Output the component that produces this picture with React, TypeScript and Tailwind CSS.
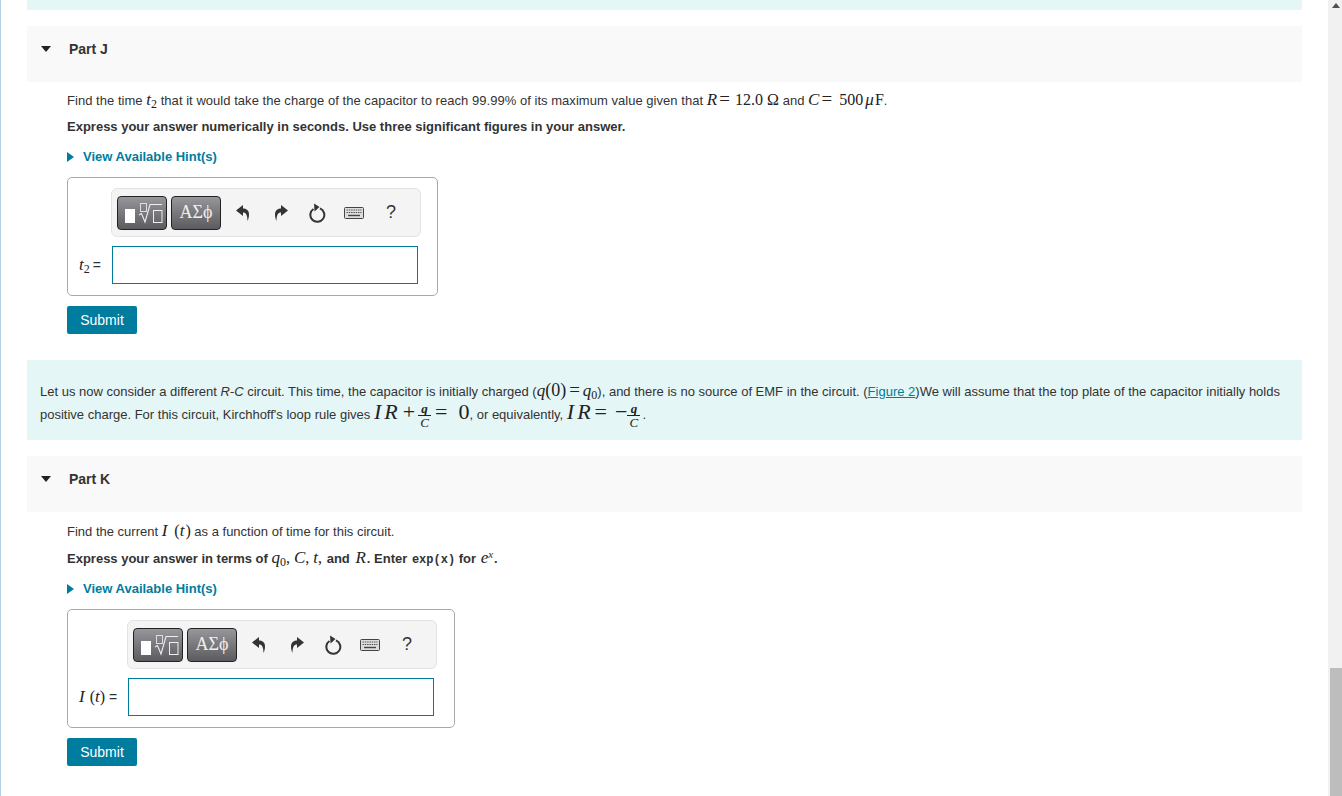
import React from 'react';

const Mi = ({ children, className = '' }: { children: React.ReactNode; className?: string }) => (
  <span className={`font-['Liberation_Serif',serif] italic font-normal text-[17px] text-[#222] ${className}`}>{children}</span>
);

const Mn = ({ children, className = '' }: { children: React.ReactNode; className?: string }) => (
  <span className={`font-['Liberation_Serif',serif] font-normal text-[16px] text-[#222] ${className}`}>{children}</span>
);

const Sub = ({ children }: { children: React.ReactNode }) => (
  <span className="font-['Liberation_Serif',serif] font-normal text-[12px] relative top-[3px] text-[#222]">{children}</span>
);

const Big = ({ children, className = '' }: { children: React.ReactNode; className?: string }) => (
  <span className={`font-['Liberation_Serif',serif] text-[22px] leading-[20px] text-[#222] ${className}`}>{children}</span>
);

const Frac = ({ top, bottom, className = '' }: { top: string; bottom: string; className?: string }) => (
  <span className={`inline-flex flex-col items-center align-middle -my-[6px] w-[13px] font-['Liberation_Serif',serif] italic font-bold text-[13px] leading-[11px] text-[#222] ${className}`}>
    <span className="border-b border-[#222] w-full text-center pb-[1px]">{top}</span>
    <span className="font-normal pt-[1px]">{bottom}</span>
  </span>
);

const PartHeader = ({ title }: { title: string }) => (
  <div className="h-14 bg-[#f9f9f9] flex items-start pl-[14px] pt-[14px]">
    <svg width="10" height="6" viewBox="0 0 10 6" className="mt-[6px]">
      <path d="M0 0H10L5 6Z" fill="#222" />
    </svg>
    <span className="ml-[18px] text-[14px] leading-[18px] font-bold text-[#333]">{title}</span>
  </div>
);

const Hint = () => (
  <div className="mt-[12px] h-[18px] flex items-center">
    <svg width="7" height="10" viewBox="0 0 7 10">
      <path d="M0 0L7 5L0 10Z" fill="#007c9f" />
    </svg>
    <span className="ml-[9px] text-[13px] font-bold text-[#007c9f]">View Available Hint(s)</span>
  </div>
);

const Radical = () => (
  <svg width="48" height="32" viewBox="0 0 48 32" className="block">
    <rect x="7" y="12" width="10" height="14" fill="#fff" />
    <rect x="22.5" y="6.5" width="6" height="8" fill="none" stroke="#ddd" strokeWidth="1" />
    <path d="M21 18L23.5 16.5L27 25L32 7.5H44" fill="none" stroke="#eee" strokeWidth="1.1" />
    <rect x="35.5" y="13.5" width="8.5" height="12" fill="none" stroke="#eee" strokeWidth="1" />
  </svg>
);

const Keyboard = () => (
  <svg width="20" height="12" viewBox="0 0 20 12" className="block">
    <rect x="0.5" y="0.5" width="19" height="11" rx="1" fill="#ddd" stroke="#444" />
    <path d="M2.5 3H17.5M2.5 5.5H17.5" stroke="#555" strokeWidth="1.2" strokeDasharray="1.5 0.8" />
    <path d="M4 8.5H16" stroke="#444" strokeWidth="1.4" />
  </svg>
);

const Toolbar = ({ className }: { className: string }) => (
  <div className={`h-[49px] w-[310px] bg-[#f4f4f4] border border-[#e3e3e3] rounded-[6px] flex items-center pl-[5px] ${className}`}>
    <div className="w-[50px] h-[34px] rounded-[4px] border border-[#222] bg-gradient-to-b from-[#96969b] to-[#5c5c60] flex items-center justify-center">
      <Radical />
    </div>
    <div className="ml-[4px] w-[50px] h-[34px] rounded-[4px] border border-[#222] bg-gradient-to-b from-[#96969b] to-[#5c5c60] flex items-center justify-center font-['Liberation_Serif',serif] text-[18px] text-[#eee]">
      ΑΣϕ
    </div>
    <svg width="14" height="16" viewBox="0 0 14 16" className="ml-[15px]">
      <path d="M7 0L0 5.5L7 11V7.5C10 7.5 11.5 10 11.5 16C14.5 9 13 3.5 7 3.5Z" fill="#333" />
    </svg>
    <svg width="14" height="16" viewBox="0 0 14 16" className="ml-[24px]">
      <path d="M7 0L14 5.5L7 11V7.5C4 7.5 2.5 10 2.5 16C-0.5 9 1 3.5 7 3.5Z" fill="#333" />
    </svg>
    <svg width="18" height="20" viewBox="0 0 18 20" className="ml-[20px]">
      <path d="M5.5 6A7 7 0 1 0 12 5.4" fill="none" stroke="#333" strokeWidth="2" />
      <path d="M6 0.5L11.5 4L6.5 8.5Z" fill="#333" />
    </svg>
    <span className="ml-[18px]"><Keyboard /></span>
    <span className="ml-[22px] font-['Liberation_Sans',sans-serif] text-[18px] text-[#333]">?</span>
  </div>
);

const AnswerBox = ({ label, boxClass, toolbarClass, labelClass }: { label: React.ReactNode; boxClass: string; toolbarClass: string; labelClass: string }) => (
  <div className={`h-[119px] border border-[#aaa] rounded-[5px] pt-[10px] pl-[11px] ${boxClass}`}>
    <Toolbar className={toolbarClass} />
    <div className="mt-[9px] flex items-center">
      <div className={`text-[14px] text-[#333] whitespace-nowrap ${labelClass}`}>{label}</div>
      <div className="w-[306px] h-[38px] bg-white border border-[#007c9f]" />
    </div>
  </div>
);

const Submit = () => (
  <button className="mt-[10px] w-[70px] h-[28px] bg-[#007c9f] rounded-[2px] text-white text-[14px] block">Submit</button>
);

export default function App() {
  return (
    <div className="w-[1342px] h-[796px] overflow-hidden flex bg-white font-['Liberation_Sans',Arial,sans-serif] text-[13px] text-[#333]">
      <div className="w-px bg-[#b5d0e3] shrink-0" />
      <main className="w-[1327px] shrink-0 pl-[26px] pr-[26px]">
        <div className="h-[10px] bg-[#e5f6f6]" />

        <section className="mt-4">
          <PartHeader title="Part J" />
          <div className="pl-[40px]">
            <p className="mt-[8px] h-[18px] leading-[18px] whitespace-nowrap tracking-[0.035px]">
              Find the time <Mi>t</Mi><Sub>2</Sub> that it would take the charge of the capacitor to reach 99.99% of its maximum value given that <Mi className="mr-[2px]">R</Mi><Mn className="text-[19px] leading-[18px]">=</Mn><Mn className="ml-[5px]">12.0</Mn><Mn className="ml-[4px]">Ω</Mn> and <Mi className="mr-[2px]">C</Mi><Mn className="text-[19px] leading-[18px]">=</Mn><Mn className="ml-[7px]">500</Mn><Mi className="ml-[2px]">μ</Mi><Mn className="ml-[1px]">F</Mn>.
            </p>
            <p className="mt-[10px] h-[18px] leading-[18px] font-bold">Express your answer numerically in seconds. Use three significant figures in your answer.</p>
            <Hint />
            <div className="mt-[11px]">
              <AnswerBox
                label={<><Mi>t</Mi><Sub>2</Sub><span className="ml-[3px]">=</span></>}
                boxClass="w-[371px]"
                toolbarClass="ml-[32px]"
                labelClass="w-[33px]"
              />
            </div>
            <Submit />
          </div>
        </section>

        <div className="mt-[26px] h-20 bg-[#e5f6f6] px-[13px] pt-[21px] leading-[20px]">
          Let us now consider a different <i>R-C</i> circuit. This time, the capacitor is initially charged (<Mi>q</Mi><Mn className="text-[18px] leading-[18px]">(0)</Mn><Mn className="text-[19px] leading-[18px] mx-[3px]">=</Mn><Mi>q</Mi><Sub>0</Sub>), and there is no source of EMF in the circuit. (<a className="text-[#007c9f] underline">Figure 2</a>)We will assume that the top plate of the capacitor initially holds<br />
          positive charge. For this circuit, Kirchhoff's loop rule gives <Big className="italic tracking-[3px]">IR</Big><Big className="ml-[2px]">+</Big><Frac top="q" bottom="C" className="ml-[3px] mr-[4px]" /><Big>=</Big><Big className="ml-[11px]">0</Big>, or equivalently, <Big className="italic tracking-[3px]">IR</Big><Big className="ml-[1px]">=</Big><Big className="ml-[8px]">−</Big><Frac top="q" bottom="C" className="mr-[2px]" />.
        </div>

        <section className="mt-4">
          <PartHeader title="Part K" />
          <div className="pl-[40px]">
            <p className="mt-[10px] h-[18px] leading-[18px]">
              Find the current <Mi>I</Mi><Mn className="ml-[7px]">(</Mn><Mi>t</Mi><Mn className="ml-[1px]">)</Mn> as a function of time for this circuit.
            </p>
            <p className="mt-[9px] h-[19px] leading-[18px] font-bold">
              Express your answer in terms of <Mi>q</Mi><Sub>0</Sub><Mn>,</Mn><Mi className="ml-[4px]">C</Mi><Mn>,</Mn><Mi className="ml-[4px]">t</Mi><Mn>,</Mn><span className="ml-[1px]"> and</span> <Mi className="ml-[2px] mr-[1px]">R</Mi>. Enter <span className="ml-[1px] font-['Liberation_Mono',monospace] text-[12px]">exp(x)</span> for <Mi className="ml-[1px]">e</Mi><sup className="font-['Liberation_Serif',serif] italic font-normal text-[11px] mr-[1px]">x</sup>.
            </p>
            <Hint />
            <div className="mt-[11px]">
              <AnswerBox
                label={<><Mi>I</Mi><Mn className="ml-[5px]">(</Mn><Mi>t</Mi><Mn>)</Mn><span className="ml-[4px]">=</span></>}
                boxClass="w-[388px]"
                toolbarClass="ml-[48px]"
                labelClass="w-[49px]"
              />
            </div>
            <Submit />
          </div>
        </section>
      </main>

      <div className="w-[14px] shrink-0 bg-[#f1f1f1] flex flex-col justify-between pl-[2px]">
        <svg width="12" height="6" viewBox="0 0 12 6" className="mt-[2px]">
          <path d="M2 6L6 1L10 6Z" fill="#505050" />
        </svg>
        <div className="h-[128px] bg-[#bdbdbd]" />
      </div>
    </div>
  );
}
